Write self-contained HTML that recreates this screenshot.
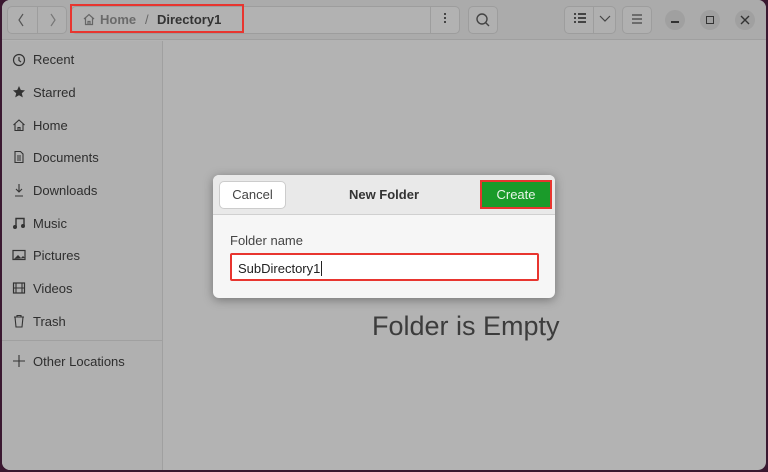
<!DOCTYPE html>
<html><head><meta charset="utf-8"><style>
*{margin:0;padding:0;box-sizing:border-box}
html,body{background:#3a1830}
body{width:768px;height:472px;position:relative;overflow:hidden;font-family:"Liberation Sans",sans-serif;color:#2e2e2e}
.win{position:absolute;left:2px;top:0;width:764px;height:470px;background:#b3b3b3;border-radius:8px;overflow:hidden}
.hdr{position:absolute;left:0;top:0;width:764px;height:40px;background:#ababab;border-bottom:1px solid #9f9f9f}
.btn{position:absolute;border:1px solid #9d9d9d;border-radius:5px;background:#b0b0b0}
.side{position:absolute;left:0;top:41px;width:161px;height:430px;background:#b0b0b0;border-right:1px solid #a0a0a0}
.it{position:absolute;left:31px;font-size:13px;color:#2e2e2e}
.ic{position:absolute;left:10px;width:14px;height:14px}
.empty{position:absolute;left:370px;top:311px;font-size:27px;color:#3c3c3c}
.dlg{position:absolute;left:213px;top:175px;width:342px;height:123px;background:#f6f6f6;border-radius:6px;box-shadow:0 2px 10px rgba(0,0,0,.35);overflow:hidden}
.dh{position:absolute;left:0;top:0;width:342px;height:40px;background:#e9e9e9;border-bottom:1px solid #d0d0d0}
</style></head><body>
<div class="win">
<div class="hdr">
 <div class="btn" style="left:5px;top:6px;width:60px;height:28px"></div>
 <div style="position:absolute;left:35px;top:7px;width:1px;height:26px;background:#9d9d9d"></div>
 <svg style="position:absolute;left:15px;top:13px" width="8" height="14"><path d="M6 1L2 7l4 6" fill="none" stroke="#555" stroke-width="1.2"/></svg>
 <svg style="position:absolute;left:47px;top:13px" width="8" height="14"><path d="M2 1l4 6-4 6" fill="none" stroke="#777" stroke-width="1.2"/></svg>
 <div class="btn" style="left:69px;top:6px;width:389px;height:28px;background:#b2b2b2"></div>
 <div style="position:absolute;left:68px;top:4px;width:174px;height:29px;border:2px solid #e8352f"></div>
 <svg style="position:absolute;left:80px;top:12px" width="14" height="14" viewBox="0 0 14 14"><path d="M2 7L7 2.5 12 7M3.5 6v6.5h7V6M6 12.5v-3h2v3" fill="none" stroke="#666" stroke-width="1.2"/></svg>
 <div style="position:absolute;left:98px;top:12px;font-size:13px;font-weight:bold;color:#6a6a6a">Home</div>
 <div style="position:absolute;left:143px;top:12px;font-size:13px;color:#666">/</div>
 <div style="position:absolute;left:155px;top:12px;font-size:13px;font-weight:bold;color:#333">Directory1</div>
 <div style="position:absolute;left:428px;top:7px;width:1px;height:26px;background:#9d9d9d"></div>
 <div style="position:absolute;left:442px;top:13px;width:2px;height:2px;background:#444;box-shadow:0 4px #444,0 8px #444"></div>
 <div class="btn" style="left:466px;top:6px;width:30px;height:28px"></div>
 <svg style="position:absolute;left:473px;top:12px" width="16" height="16"><circle cx="7" cy="7" r="5" fill="none" stroke="#444" stroke-width="1.4"/><path d="M10.5 10.5L14 14" stroke="#444" stroke-width="1.4"/></svg>
 <div class="btn" style="left:562px;top:6px;width:52px;height:28px"></div>
 <div style="position:absolute;left:591px;top:7px;width:1px;height:26px;background:#9d9d9d"></div>
 <svg style="position:absolute;left:571px;top:13px" width="14" height="12"><path d="M1 1h2M1 5h2M1 9h2M5 1h8M5 5h8M5 9h8" stroke="#444" stroke-width="2"/></svg>
 <svg style="position:absolute;left:597px;top:15px" width="12" height="8"><path d="M1 1l5 5 5-5" fill="none" stroke="#444" stroke-width="1.2"/></svg>
 <div class="btn" style="left:620px;top:6px;width:30px;height:28px"></div>
 <svg style="position:absolute;left:629px;top:13px" width="12" height="12"><path d="M1 2h10M1 6h10M1 10h10" stroke="#444" stroke-width="1.3"/></svg>
 <div style="position:absolute;left:663px;top:10px;width:20px;height:20px;border-radius:50%;background:#a0a0a0"></div>
 <div style="position:absolute;left:669px;top:21px;width:8px;height:1.5px;background:#333"></div>
 <div style="position:absolute;left:698px;top:10px;width:20px;height:20px;border-radius:50%;background:#a0a0a0"></div>
 <div style="position:absolute;left:704px;top:16px;width:8px;height:8px;border:1.4px solid #333"></div>
 <div style="position:absolute;left:733px;top:10px;width:20px;height:20px;border-radius:50%;background:#a0a0a0"></div>
 <svg style="position:absolute;left:738px;top:15px" width="10" height="10"><path d="M1 1l8 8M9 1L1 9" stroke="#333" stroke-width="1.4"/></svg>
</div>
<div class="side">
 <svg class="ic" style="top:12px" viewBox="0 0 14 14"><circle cx="7" cy="7" r="5.5" fill="none" stroke="#333" stroke-width="1.2"/><path d="M7 4v3.5l2 1.5" fill="none" stroke="#333" stroke-width="1.2"/></svg><div class="it" style="top:11px">Recent</div>
 <svg class="ic" style="top:44px" viewBox="0 0 14 14"><path d="M7 1l1.8 4 4.2.4-3.2 2.8 1 4.2L7 10.2 3.2 12.4l1-4.2L1 5.4 5.2 5z" fill="#333"/></svg><div class="it" style="top:44px">Starred</div>
 <svg class="ic" style="top:77px" viewBox="0 0 14 14"><path d="M1.5 7L7 2 12.5 7M3 6v6.5h8V6M6 12.5v-3h2v3" fill="none" stroke="#333" stroke-width="1.1"/></svg><div class="it" style="top:77px">Home</div>
 <svg class="ic" style="top:109px" viewBox="0 0 14 14"><path d="M3 1.5h5.5l2.5 2.5v8.5H3z M5 6h4M5 8h4M5 10h4" fill="none" stroke="#333" stroke-width="1.1"/></svg><div class="it" style="top:109px">Documents</div>
 <svg class="ic" style="top:142px" viewBox="0 0 14 14"><path d="M7 1v8M4 6l3 3 3-3M3 13h8" fill="none" stroke="#333" stroke-width="1.1"/></svg><div class="it" style="top:142px">Downloads</div>
 <svg class="ic" style="top:175px" viewBox="0 0 14 14"><path d="M4 11V2.5h8V10" fill="none" stroke="#333" stroke-width="1.4"/><circle cx="3" cy="11" r="2" fill="#333"/><circle cx="11" cy="10" r="2" fill="#333"/></svg><div class="it" style="top:175px">Music</div>
 <svg class="ic" style="top:207px" viewBox="0 0 14 14"><rect x="1" y="2.5" width="12" height="9" fill="none" stroke="#333" stroke-width="1.2"/><path d="M2 11l4-4 3 3 2-2 2 2" fill="#333"/></svg><div class="it" style="top:207px">Pictures</div>
 <svg class="ic" style="top:240px" viewBox="0 0 14 14"><rect x="1.5" y="2" width="11" height="10" fill="none" stroke="#333" stroke-width="1.2"/><path d="M4 2v10M10 2v10M1.5 7h11" stroke="#333" stroke-width="1.1"/></svg><div class="it" style="top:240px">Videos</div>
 <svg class="ic" style="top:273px" viewBox="0 0 14 14"><path d="M2 3h10M5 3V1.5h4V3M3 3l1 10h6l1-10" fill="none" stroke="#333" stroke-width="1.1"/></svg><div class="it" style="top:273px">Trash</div>
 <div style="position:absolute;left:0;top:299px;width:161px;height:1px;background:#a0a0a0"></div>
 <svg class="ic" style="top:313px" viewBox="0 0 14 14"><path d="M7 1v12M1 7h12" stroke="#333" stroke-width="1.1"/></svg><div class="it" style="top:313px">Other Locations</div>
</div>
<div class="empty">Folder is Empty</div>
</div>
<div class="dlg">
 <div class="dh"></div>
 <div style="position:absolute;left:6px;top:6px;width:67px;height:28px;background:#fff;border:1px solid #ccc;border-radius:5px;font-size:13px;color:#444;text-align:center;line-height:26px">Cancel</div>
 <div style="position:absolute;left:0;width:342px;top:12px;text-align:center;font-size:13px;font-weight:bold;color:#333">New Folder</div>
 <div style="position:absolute;left:267px;top:5px;width:72px;height:29px;background:#1a9b2a;border:2px solid #e8352f;font-size:13px;color:#e8f5e8;text-align:center;line-height:25px">Create</div>
 <div style="position:absolute;left:17px;top:58px;font-size:13px;color:#444">Folder name</div>
 <div style="position:absolute;left:17px;top:78px;width:309px;height:28px;background:#fff;border:2px solid #e8352f;border-radius:2px;font-size:13px;color:#222;padding:6px 0 0 6px">SubDirectory1<span style="border-left:1px solid #222;margin-left:1px"></span></div>
</div>
</body></html>
